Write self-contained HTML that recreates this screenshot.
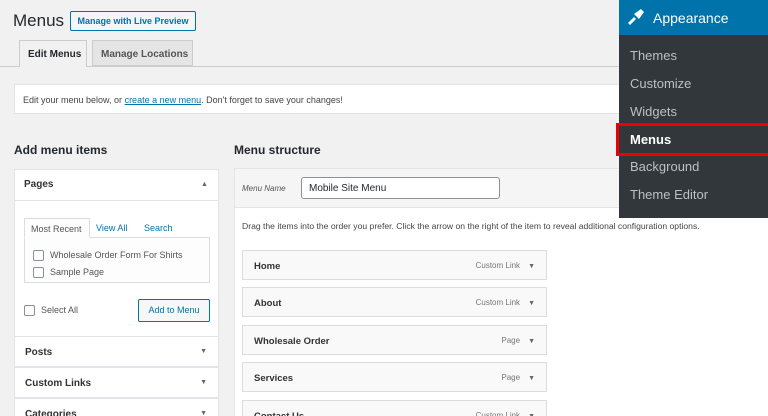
<!DOCTYPE html><html><head><style>
*{box-sizing:border-box;margin:0;padding:0}
html{width:768px;height:416px;overflow:hidden}
body{width:768px;height:416px;overflow:hidden;background:#f1f1f1;font-family:"Liberation Sans",sans-serif;color:#23282d;position:relative;font-size:10px}
.a{position:absolute}
.box{background:#fff;border:1px solid #e2e4e7}
.item{position:absolute;left:242px;width:305px;height:30px;background:#f9f9f9;border:1px solid #dcdcde;font-weight:bold;font-size:9.5px;padding:10px 0 0 11px;color:#333}
.item span{position:absolute;right:11px;top:10px;font-weight:normal;font-size:8px;color:#777}
.item span b{margin-left:8px;font-size:7px;color:#666}
.sec{position:absolute;left:14px;width:205px;height:31px;background:#fff;border:1px solid #e2e4e7;font-weight:bold;font-size:10px;padding:10px 0 0 10px;color:#333}
.sec i{position:absolute;right:11px;top:11px;font-style:normal;font-size:7px;color:#666}
.m{position:absolute;left:630px;font-size:13px;color:#bbc0c4}
.cb{display:inline-block;width:11px;height:11px;border:1px solid #8c8f94;border-radius:2px;background:#fff;vertical-align:middle;margin-right:6px}
</style></head><body>
<div class="a" style="left:13px;top:11px;font-size:17px;color:#23282d">Menus</div>
<div class="a" style="left:70px;top:11px;width:126px;height:20px;border:1px solid #0073aa;color:#0073aa;font-size:9px;font-weight:bold;text-align:center;line-height:18px;background:#f3f5f6;border-radius:2px">Manage with Live Preview</div>
<div class="a" style="left:0;top:66px;width:768px;height:1px;background:#ccc"></div>
<div class="a" style="left:19px;top:40px;width:68px;height:27px;border:1px solid #ccc;border-bottom:none;background:#f1f1f1;font-size:10px;font-weight:bold;padding:8px 0 0 8px">Edit Menus</div>
<div class="a" style="left:92px;top:40px;width:101px;height:26px;border:1px solid #ccc;background:#e5e5e5;font-size:10px;font-weight:bold;color:#555;padding:8px 0 0 8px">Manage Locations</div>
<div class="a box" style="left:14px;top:84px;width:760px;height:30px;font-size:9px;padding:10px 0 0 8px;color:#444">Edit your menu below, or <u style="color:#0073aa">create a new menu</u>. Don't forget to save your changes!</div>
<div class="a" style="left:14px;top:143px;font-size:12px;font-weight:bold">Add menu items</div>
<div class="a" style="left:234px;top:143px;font-size:12px;font-weight:bold">Menu structure</div>
<div class="a box" style="left:14px;top:169px;width:205px;height:168px"></div>
<div class="a" style="left:24px;top:179px;font-size:10px;font-weight:bold;color:#333">Pages</div>
<div class="a" style="left:201px;top:181px;font-size:7px;color:#666">▲</div>
<div class="a" style="left:14px;top:200px;width:205px;height:1px;background:#e2e4e7"></div>
<div class="a" style="left:24px;top:237px;width:186px;height:46px;border:1px solid #ddd;background:#fdfdfd"></div>
<div class="a" style="left:24px;top:218px;width:66px;height:20px;border:1px solid #ddd;border-bottom:1px solid #fdfdfd;background:#fdfdfd;font-size:9px;color:#555;padding:5px 0 0 6px">Most Recent</div>
<div class="a" style="left:96px;top:223px;font-size:9px;color:#0073aa">View All</div>
<div class="a" style="left:144px;top:223px;font-size:9px;color:#0073aa">Search</div>
<div class="a" style="left:33px;top:250px;font-size:9px;color:#555"><span class="cb"></span>Wholesale Order Form For Shirts</div>
<div class="a" style="left:33px;top:267px;font-size:9px;color:#555"><span class="cb"></span>Sample Page</div>
<div class="a" style="left:24px;top:305px;font-size:9px;color:#555"><span class="cb"></span>Select All</div>
<div class="a" style="left:138px;top:299px;width:72px;height:23px;border:1px solid #0073aa;border-radius:2px;background:#f6f7f7;color:#0073aa;font-size:9px;text-align:center;line-height:21px">Add to Menu</div>
<div class="sec" style="top:336px">Posts<i>▼</i></div>
<div class="sec" style="top:367px">Custom Links<i>▼</i></div>
<div class="sec" style="top:398px">Categories<i>▼</i></div>
<div class="a" style="left:234px;top:168px;width:540px;height:40px;background:#f5f5f5;border:1px solid #e2e4e7"></div>
<div class="a" style="left:242px;top:184px;font-size:8px;font-style:italic;color:#555">Menu Name</div>
<div class="a" style="left:301px;top:177px;width:199px;height:22px;border:1px solid #8c8f94;border-radius:3px;background:#fff;font-size:10px;padding:5px 0 0 7px">Mobile Site Menu</div>
<div class="a box" style="left:234px;top:207px;width:540px;height:220px"></div>
<div class="a" style="left:242px;top:221px;font-size:8.6px;color:#444">Drag the items into the order you prefer. Click the arrow on the right of the item to reveal additional configuration options.</div>
<div class="item" style="top:250px">Home<span>Custom Link<b>▼</b></span></div>
<div class="item" style="top:287px">About<span>Custom Link<b>▼</b></span></div>
<div class="item" style="top:325px">Wholesale Order<span>Page<b>▼</b></span></div>
<div class="item" style="top:362px">Services<span>Page<b>▼</b></span></div>
<div class="item" style="top:400px">Contact Us<span>Custom Link<b>▼</b></span></div>
<div class="a" style="left:619px;top:0;width:149px;height:218px;background:#32373c"></div>
<div class="a" style="left:619px;top:0;width:149px;height:35px;background:#0073aa"></div>
<svg class="a" style="left:626px;top:9px" width="18" height="16" viewBox="0 0 18 16"><path d="M2 14 L8 8 L10 10 L4 16Z M8 5 L15 0 L18 3 L13 10Z" fill="#fff"/></svg>
<div class="a" style="left:653px;top:10px;font-size:14px;color:#fff">Appearance</div>
<div class="m" style="top:48px">Themes</div>
<div class="m" style="top:76px">Customize</div>
<div class="m" style="top:104px">Widgets</div>
<div class="m" style="top:132px;color:#fff;font-weight:bold">Menus</div>
<div class="m" style="top:159px">Background</div>
<div class="m" style="top:187px">Theme Editor</div>
<div class="a" style="left:616px;top:123px;width:155px;height:33px;border:3px solid #e00"></div>
</body></html>
